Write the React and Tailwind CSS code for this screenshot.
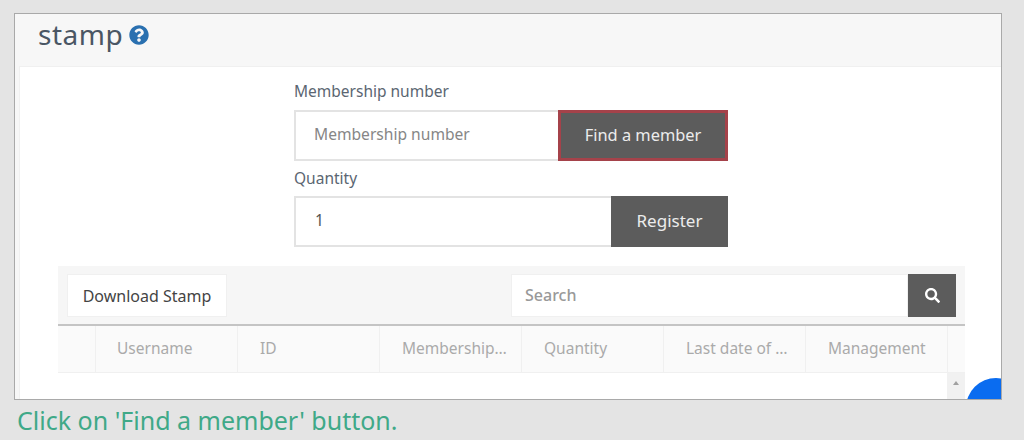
import { FaQuestionCircle, FaSearch } from "react-icons/fa";

const columns = [
  { label: "", width: "w-[38px]" },
  { label: "Username", width: "w-[142px]", pad: "pl-[21px]" },
  { label: "ID", width: "w-[142px]" },
  { label: "Membership…", width: "w-[142px]" },
  { label: "Quantity", width: "w-[142px]" },
  { label: "Last date of …", width: "w-[142px]" },
  { label: "Management", width: "w-[142px]" },
];

function InputRow({ value, placeholder, button, buttonWidth, buttonText, highlighted }) {
  return (
    <div className="flex h-[51px] w-[434px]">
      <div
        className={`flex-1 flex items-center pb-[1px] border-2 border-r-0 border-[#e3e3e3] bg-white text-[15.6px] ${
          placeholder ? "pl-[18px] text-[#868686]" : "pl-[19px] text-[#555]"
        }`}
      >
        {value || placeholder}
      </div>
      <button
        className={`${buttonWidth} ${buttonText} flex items-center justify-center pb-[1px] bg-[#5c5c5c] text-[#ececec] ${
          highlighted ? "border-[3px] border-[#a5424a]" : ""
        }`}
      >
        {button}
      </button>
    </div>
  );
}

export default function App() {
  return (
    <div
      className="w-[1024px] h-[440px] overflow-hidden bg-[#e4e4e4] pt-[13px] pl-[14px]"
      style={{ fontFamily: '"Noto Sans", sans-serif' }}
    >
      <div className="relative w-[988px] h-[387px] overflow-hidden border border-[#a9a9a9] bg-[#f7f7f7]">
        {/* Title */}
        <div className="h-[52px] flex items-center gap-[6px] pl-[23px] pb-[12px]">
          <span className="text-[28px] leading-none text-[#4a5664] tracking-[0.5px]">stamp</span>
          <FaQuestionCircle className="text-[#2a70b0] text-[20px] mt-[2px]" />
        </div>

        {/* Content */}
        <div className="ml-[4px] h-[334px] bg-white border-t border-l border-[#f0f0f0]">
          <div className="w-[434px] ml-[274px] pt-[13px] text-[#5b6672]">
            <div className="h-[30px] text-[15.5px] leading-[22px]">Membership number</div>
            <InputRow
              placeholder="Membership number"
              button="Find a member"
              buttonWidth="w-[170px]"
              buttonText="text-[16.4px]"
              highlighted
            />
            <div className="h-[35px] pt-[6px] text-[15.5px] leading-[22px]">Quantity</div>
            <InputRow value="1" button="Register" buttonWidth="w-[117px]" buttonText="text-[17px]" />
          </div>

          {/* Table */}
          <div className="ml-[38px] mt-[19px] w-[907px]">
            <div className="h-[60px] flex items-center justify-between pl-[9px] pr-[9px] bg-[#f6f6f6] border-b-2 border-[#c4c4c4]">
              <button className="h-[43px] w-[160px] pt-[1px] bg-white border border-[#f0f0f0] text-[16px] text-[#444]">
                Download Stamp
              </button>
              <div className="flex h-[43px] w-[445px]">
                <div className="flex-1 flex items-center pl-[13px] bg-white border border-[#f0f0f0] text-[16px] font-medium text-[#999]">
                  Search
                </div>
                <div className="w-[48px] flex items-center justify-center bg-[#5c5c5c]">
                  <FaSearch className="text-white text-[15px]" />
                </div>
              </div>
            </div>
            <div className="h-[47px] flex bg-[#fafafa] border-b border-[#f0f0f0]">
              {columns.map((col, i) => (
                <div
                  key={i}
                  className={`${col.width} ${col.pad || "pl-[22px]"} flex items-center border-r border-[#f0f0f0] text-[15.5px] text-[#aaa] whitespace-nowrap`}
                >
                  {col.label}
                </div>
              ))}
            </div>
            <div className="flex justify-end">
              <div className="w-[18px] h-[28px] bg-[#f1f1f1] flex justify-center pt-[8px]">
                <div className="w-0 h-0 border-x-[3px] border-x-transparent border-b-[4px] border-b-[#a0a0a0]" />
              </div>
            </div>
          </div>
        </div>

        {/* Chat bubble */}
        <div className="absolute left-[951px] top-[364px] w-[60px] h-[60px] rounded-full bg-[#0a6cf0]" />
      </div>

      <div className="-ml-[11px] pl-[14px] pt-[3px] text-[25px] leading-[34px] text-[#3fa988]">
        Click on 'Find a member' button.
      </div>
    </div>
  );
}
